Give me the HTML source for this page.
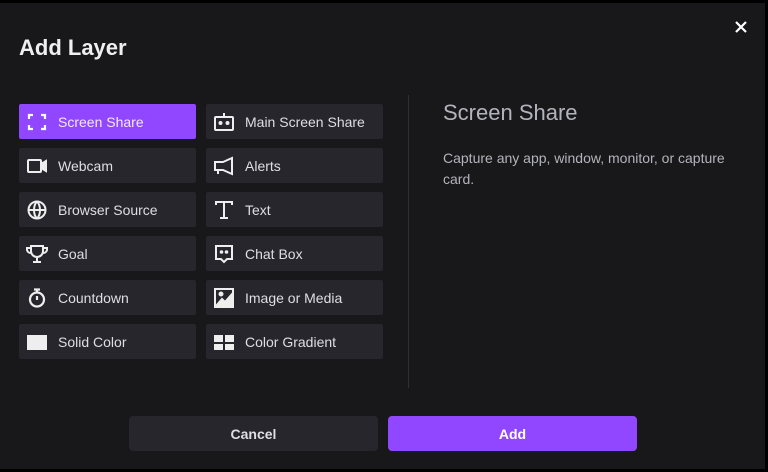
<!DOCTYPE html>
<html><head><meta charset="utf-8"><style>
*{margin:0;padding:0;box-sizing:border-box}
html,body{width:768px;height:472px;background:#000;overflow:hidden;font-family:"Liberation Sans",sans-serif}
.dlg{position:absolute;left:0;top:3px;width:765px;height:466px;background:#18181b}
.t{position:absolute;left:19px;top:32px;font-size:22px;font-weight:bold;color:#efeff1}
.x{position:absolute;left:734px;top:17px}
.b{position:absolute;width:177px;height:35px;background:#26262c;border-radius:2px;color:#dedee3;font-size:14px;line-height:37px;padding-left:39px}
.b.s{background:#9147ff;color:#f2eaff}
.b svg{position:absolute;left:7px;top:8px}
.div{position:absolute;left:408px;top:92px;width:1px;height:293px;background:#2f2f35}
.h{position:absolute;left:443px;top:97px;font-size:22px;color:#b3b3bb}
.d{position:absolute;left:443px;top:145px;width:300px;font-size:14px;line-height:21px;color:#b3b3bb}
.btn{position:absolute;top:413px;width:249px;height:35px;border-radius:4px;font-size:14px;font-weight:bold;text-align:center;line-height:37px}
</style></head><body>
<div class="dlg">
<div class="t">Add Layer</div>
<svg class="x" width="14" height="14" viewBox="0 0 14 14"><path d="M2 2L12 12M12 2L2 12" stroke="#fff" stroke-width="2.2"/></svg>

<div class="b s" style="left:19px;top:101px"><svg width="22" height="20" viewBox="0 0 22 20" fill="none" stroke="#fff" stroke-width="2.2"><path d="M3 7V3h4M15 3h4v4M19 13v4h-4M7 17H3v-4"/></svg>Screen Share</div>
<div class="b" style="left:206px;top:101px"><svg width="22" height="20" viewBox="0 0 22 20" fill="none" stroke="#eee" stroke-width="2"><rect x="2" y="5" width="18" height="13" rx="1"/><path d="M11 1v4"/><circle cx="7.5" cy="11" r="1" fill="#eee"/><circle cx="14.5" cy="11" r="1" fill="#eee"/></svg>Main Screen Share</div>

<div class="b" style="left:19px;top:145px"><svg width="22" height="20" viewBox="0 0 22 20" fill="none" stroke="#eee" stroke-width="2"><rect x="2" y="4" width="13" height="12" rx="1"/><path d="M15 8l5-3v10l-5-3z" fill="#eee"/></svg>Webcam</div>
<div class="b" style="left:206px;top:145px"><svg width="22" height="20" viewBox="0 0 22 20" fill="none" stroke="#eee" stroke-width="2"><path d="M2 6h8l9-4v16l-9-4H2z M5 14v4"/></svg>Alerts</div>

<div class="b" style="left:19px;top:189px"><svg width="22" height="20" viewBox="0 0 22 20" fill="none" stroke="#eee" stroke-width="2"><circle cx="11" cy="10" r="8.5"/><path d="M2.5 10h17M11 1.5c-4 4-4 13 0 17M11 1.5c4 4 4 13 0 17"/></svg>Browser Source</div>
<div class="b" style="left:206px;top:189px"><svg width="22" height="20" viewBox="0 0 22 20" fill="none" stroke="#eee" stroke-width="2"><path d="M3 5V2h16v3M11 2v16M7 18h8"/></svg>Text</div>

<div class="b" style="left:19px;top:233px"><svg width="22" height="20" viewBox="0 0 22 20" fill="none" stroke="#eee" stroke-width="2"><path d="M5 2h12v5a6 6 0 0 1-12 0zM5 4H1v2a4 4 0 0 0 4 3M17 4h4v2a4 4 0 0 1-4 3M11 13v4M7 18h8"/></svg>Goal</div>
<div class="b" style="left:206px;top:233px"><svg width="22" height="20" viewBox="0 0 22 20" fill="none" stroke="#eee" stroke-width="2"><path d="M3 2h16v13h-5l-3 3-3-3H3z"/><circle cx="8.5" cy="8" r="0.8" fill="#eee"/><circle cx="13.5" cy="8" r="0.8" fill="#eee"/></svg>Chat Box</div>

<div class="b" style="left:19px;top:277px"><svg width="22" height="20" viewBox="0 0 22 20" fill="none" stroke="#eee" stroke-width="2.2"><circle cx="11" cy="11.5" r="7"/><path d="M8 1.5h6M11 1.5v3M11 8v4"/></svg>Countdown</div>
<div class="b" style="left:206px;top:277px"><svg width="22" height="20" viewBox="0 0 22 20" fill="none" stroke="#eee" stroke-width="2"><rect x="2" y="1" width="18" height="18"/><path d="M3 18l6-7 3 3 7-8v12z" fill="#eee"/><circle cx="8" cy="6" r="1.5" fill="#eee"/></svg>Image or Media</div>

<div class="b" style="left:19px;top:321px"><svg width="22" height="20" viewBox="0 0 22 20"><rect x="1" y="3" width="20" height="15" fill="#eee"/></svg>Solid Color</div>
<div class="b" style="left:206px;top:321px"><svg width="22" height="20" viewBox="0 0 22 20" fill="#eee"><rect x="1" y="3" width="9" height="7"/><rect x="12" y="3" width="9" height="7"/><rect x="1" y="12" width="9" height="6"/><rect x="12" y="12" width="9" height="6"/></svg>Color Gradient</div>

<div class="div"></div>
<div class="h">Screen Share</div>
<div class="d">Capture any app, window, monitor, or capture card.</div>

<div class="btn" style="left:129px;background:#26262c;color:#dedee3">Cancel</div>
<div class="btn" style="left:388px;background:#9147ff;color:#fff">Add</div>
</div>
</body></html>
